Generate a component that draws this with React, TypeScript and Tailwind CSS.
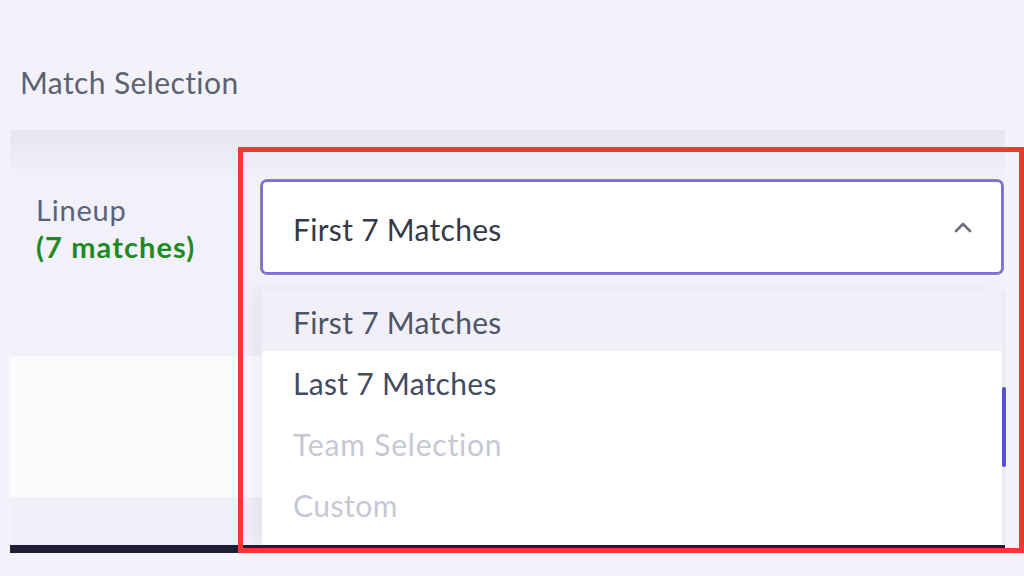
import React from "react";

export default function App() {
  const font = { fontFamily: "Lato, 'Noto Sans', sans-serif" };
  return (
    <div
      className="relative w-[1024px] h-[576px] overflow-hidden bg-[#f4f3fb]"
      style={font}
    >
      <div className="ml-[10px] mt-[38px] w-[995px] flex flex-col">
        <div className="h-[92px] flex items-center pl-[10px] pb-[4px] bg-[#f3f2fa]">
          <span className="text-[30px] tracking-[0.4px] text-[#5b6272] leading-none">Match Selection</span>
        </div>
        <div className="h-[40px] bg-gradient-to-b from-[#e7e6f0] to-[#f0eff8]" />
        <div className="h-[186px] flex bg-[#f2f1fa]">
          <div className="w-[251px] pl-[26px] pt-[21px] flex flex-col">
            <span className="text-[29px] leading-[37px] tracking-[0.8px] text-[#5b6378]">Lineup</span>
            <span className="text-[29px] leading-[37px] tracking-[1.1px] font-bold text-[#1f8a1f]">(7 matches)</span>
          </div>
          <div className="flex-1 pt-[10px] pr-[2px]">
            <div className="h-[94px] rounded-[6px] border-2 border-[#7a6ee0] bg-white ring-1 ring-[#8a8b98] flex items-center justify-between pl-[30px] pr-[28px]">
              <span className="text-[30px] tracking-[0.3px] text-[#353a4a] pt-[4px]">First 7 Matches</span>
              <svg width="20" height="12" viewBox="0 0 20 12" fill="none">
                <path d="M3 10 L10 3 L17 10" stroke="#6b6f7a" strokeWidth="2.6" strokeLinecap="round" strokeLinejoin="round" />
              </svg>
            </div>
          </div>
        </div>
        <div className="h-[141px] bg-[#fbfbfe]" />
        <div className="h-[48px] bg-[#f1f0f8]" />
        <div className="h-[8px] bg-[#1f1c36]" />
      </div>

      {/* dropdown list */}
      <div className="absolute left-[262px] top-[290px] w-[740px] h-[255px] bg-white shadow-[-10px_0_14px_rgba(40,40,80,0.05)] flex flex-col">
        <div className="h-[61px] flex items-center pl-[31px] pt-[3px] bg-[#f1f0f8]">
          <span className="text-[30px] tracking-[0.3px] text-[#4d5569]">First 7 Matches</span>
        </div>
        <div className="h-[61px] flex items-center pl-[31px] pt-[3px]">
          <span className="text-[30px] tracking-[0.3px] text-[#434b61]">Last 7 Matches</span>
        </div>
        <div className="h-[61px] flex items-center pl-[31px] pt-[3px]">
          <span className="text-[30px] tracking-[0.8px] text-[#c6c8d4]">Team Selection</span>
        </div>
        <div className="h-[61px] flex items-center pl-[31px] pt-[3px]">
          <span className="text-[30px] tracking-[0.5px] text-[#c6c8d4]">Custom</span>
        </div>
      </div>

      {/* scrollbar */}
      <div className="absolute left-[1002px] top-[290px] w-[4px] h-[255px] bg-[#ecebf4]" />
      <div className="absolute left-[1002px] top-[387px] w-[4px] h-[80px] rounded-full bg-[#5a4fd0]" />

      {/* red annotation */}
      <div className="absolute left-[238px] top-[147px] w-[786px] h-[406px] border-[5px] border-[#ff3333] pointer-events-none" />
    </div>
  );
}
